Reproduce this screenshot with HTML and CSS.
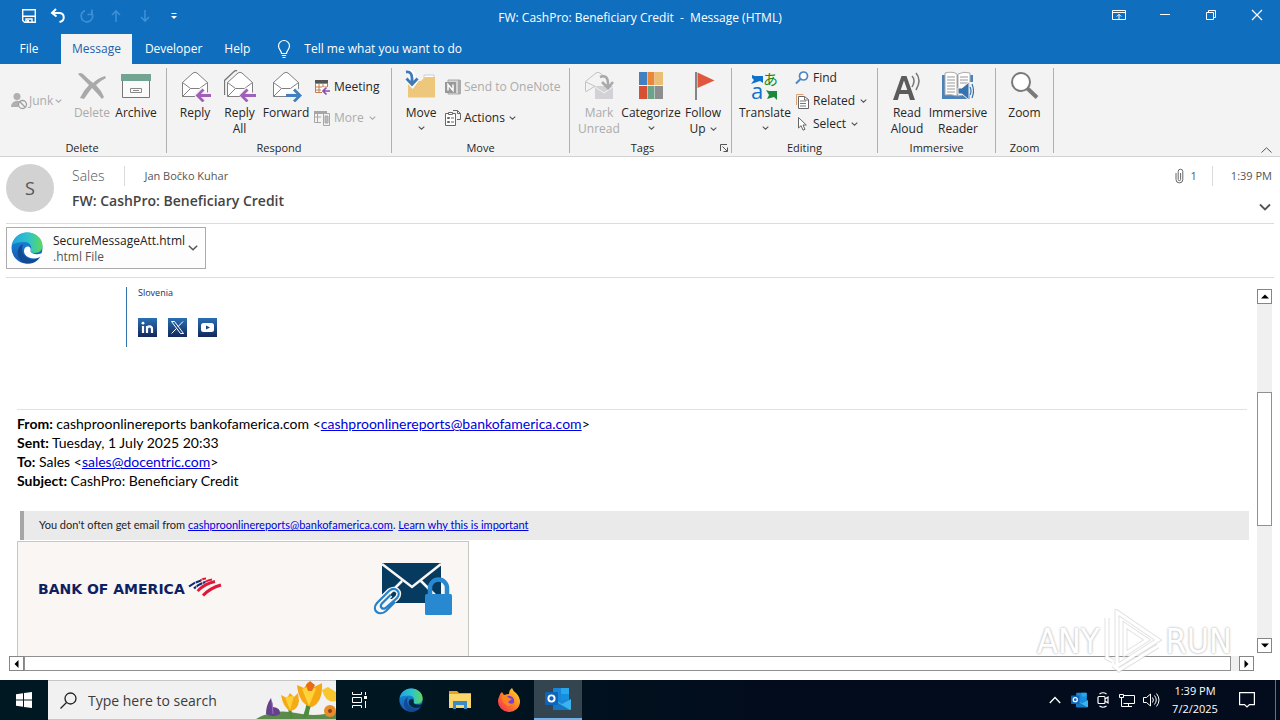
FILE: index.html
```html
<!DOCTYPE html>
<html lang="en">
<head>
<meta charset="utf-8">
<title>FW: CashPro: Beneficiary Credit - Message (HTML)</title>
<link rel="stylesheet" href="styles.css">
</head>
<body>
<svg class="defs" aria-hidden="true">
  <defs>
    <linearGradient id="edgeA" x1="0" y1="0" x2="1" y2="0"><stop offset="0" stop-color="#1fa5e0"/><stop offset=".55" stop-color="#2fc5c8"/><stop offset="1" stop-color="#5fd85a"/></linearGradient>
    <linearGradient id="edgeB" x1="0" y1="0" x2="0" y2="1"><stop offset="0" stop-color="#1b8fdc"/><stop offset="1" stop-color="#1459b0"/></linearGradient>
    <linearGradient id="fox" x1="1" y1="0" x2="0" y2="1"><stop offset="0" stop-color="#ffe23c"/><stop offset=".45" stop-color="#ff8a1e"/><stop offset="1" stop-color="#f0205c"/></linearGradient>
    <linearGradient id="social" x1="0" y1="0" x2="0" y2="1"><stop offset="0" stop-color="#2a70b4"/><stop offset="1" stop-color="#13275c"/></linearGradient>
    <symbol id="chev" viewBox="0 0 7 4"><path d="M.7.6 3.500 3.200 6.300.6" fill="none" stroke="currentColor" stroke-width="1.100"/></symbol>
    <symbol id="edge" viewBox="0 0 32 32">
      <circle cx="16" cy="16" r="15.500" fill="url(#edgeB)"/>
      <path d="M1 13C3 5 9 .5 16.500.5 25 .5 31.500 6.500 31.500 13.500c0 4.500-3 7.500-7.500 7.500-3.500 0-5-1.300-4.500-2.500 2.300-3.500-.5-8.500-6-8.500C8 10 3 11 1 13Z" fill="url(#edgeA)"/>
      <path d="M12 12c-3 6 0 13 7 15 4 1.200 8 .2 10.500-2.500C26 30 21 32 16 31.500 9 31 5.500 24 7 18c.8-3 2.500-5 5-6Z" fill="#124a94"/>
      <path class="edge-hole" d="M19.500 18.500c.5-2-.5-4-2.500-4-2.500 0-4 2-4 4.500 0 6 8.500 9.500 15 6.500 1.500-1 2.700-2.700 3.300-4.500-2 1-4.500 1.500-7.300 1-3.500-.3-5-2-4.500-3.500Z"/>
    </symbol>
    <symbol id="outlook" viewBox="0 0 26 24">
      <rect x="8" y="1" width="16" height="18" rx="1" fill="#1a86d8"/><rect x="16" y="1" width="8" height="6" fill="#28a8ea"/><rect x="16" y="7" width="8" height="6" fill="#1490df"/>
      <path d="M8 12 17 17l9-5v10a1 1 0 0 1-1 1H9a1 1 0 0 1-1-1Z" fill="#3bb3ee"/><path d="M8 13 25 23H9a1 1 0 0 1-1-1Z" fill="#1577c2"/>
      <rect x="0" y="5" width="13" height="13" rx="1" fill="#0c64bd"/><circle cx="6.500" cy="11.500" r="3.100" fill="none" stroke="#fff" stroke-width="1.900"/>
    </symbol>
  </defs>
</svg>

<div class="app">
  <header class="chrome">
    <div class="titlebar">
      <div class="quick">
        <button aria-label="Save"><svg width="16" height="16" viewBox="0 0 16 16"><path d="M1.700 1.700h12.600v12.600H3.500L1.700 12.500Z" fill="none" stroke="#fff" stroke-width="1.400"/><path d="M2 8.200h12M5 14V11h6v3" fill="none" stroke="#fff" stroke-width="1.400"/><path d="M6 12h2v2.500H6z" fill="#fff"/></svg></button>
        <button aria-label="Undo"><svg width="16" height="16" viewBox="0 0 16 16"><path d="M6 1 2 5l4.500 3.500M2.500 5H9c6 0 6.500 8 .5 9" fill="none" stroke="#fff" stroke-width="2"/></svg></button>
        <button aria-label="Redo" disabled><svg width="16" height="16" viewBox="0 0 16 16"><path d="M6 2.600A5.800 5.800 0 1 0 12 4M8.500 6.500h4.500V1.500" fill="none" stroke="#3d90d6" stroke-width="1.700"/></svg></button>
        <button aria-label="Previous" disabled><svg width="16" height="16" viewBox="0 0 16 16"><path d="M8 14V3M4 7l4-4 4 4" fill="none" stroke="#3d90d6" stroke-width="1.600"/></svg></button>
        <button aria-label="Next" disabled><svg width="16" height="16" viewBox="0 0 16 16"><path d="M8 2v11M4 9l4 4 4-4" fill="none" stroke="#3d90d6" stroke-width="1.600"/></svg></button>
        <button aria-label="Customize toolbar"><svg width="16" height="16" viewBox="0 0 16 16"><path d="M5.500 5.500h5" stroke="#fff"/><path d="M5 8h6l-3 3Z" fill="#fff"/></svg></button>
      </div>
      <h1 class="title">FW: CashPro: Beneficiary Credit&nbsp; -&nbsp; Message (HTML)</h1>
      <div class="winbtns">
        <button aria-label="Ribbon options"><svg width="14" height="14" viewBox="0 0 14 14" fill="none" stroke="#fff"><path d="M.5 2.500h13v9H.5zM.5 4.500h13M7 11V6.500M4.800 8.500 7 6.300l2.200 2.200"/></svg></button>
        <button aria-label="Minimize"><svg width="12" height="12" viewBox="0 0 12 12"><path d="M1 5.500h10" stroke="#fff"/></svg></button>
        <button aria-label="Restore"><svg width="12" height="12" viewBox="0 0 12 12" fill="none" stroke="#fff"><path d="M1.500 3.500h7v7h-7zM3.500 3V1.500h7v7H9"/></svg></button>
        <button aria-label="Close"><svg width="12" height="12" viewBox="0 0 12 12"><path d="m1 1 10 10M11 1 1 11" stroke="#fff" stroke-width="1.200"/></svg></button>
      </div>
    </div>
    <nav class="tabs">
      <button class="tab file">File</button>
      <button class="tab active">Message</button>
      <button class="tab">Developer</button>
      <button class="tab">Help</button>
      <button class="tell"><svg width="14" height="20" viewBox="0 0 14 20" fill="none" stroke="#fff" stroke-width="1.200"><path d="M4.500 14.500c0-3-3-4-3-7.500a5.500 5.500 0 0 1 11 0c0 3.500-3 4.500-3 7.500ZM4.800 16.500h4.400M5.500 18.500h3"/></svg>Tell me what you want to do</button>
    </nav>
  </header>

  <section class="ribbon" aria-label="Ribbon">
    <div class="group g-delete">
      <div class="tools">
        <div class="stack">
          <button class="small" disabled><svg width="18" height="18" viewBox="0 0 18 18"><circle cx="7" cy="4.500" r="3.500" fill="#b0b0b0"/><path d="M1 15c0-7 9-8 11-4l-4 4Z" fill="#b0b0b0"/><circle cx="12.500" cy="12.500" r="4" fill="#f3f3f3" stroke="#a0a0a0" stroke-width="1.300"/><path d="m9.800 9.800 5.400 5.400" stroke="#a0a0a0" stroke-width="1.300"/></svg>Junk<svg class="chev"><use href="#chev"/></svg></button>
        </div>
        <button class="big" disabled><svg width="32" height="32" viewBox="0 0 32 32"><path d="M2 4q2-2 5 0 5 5 10 9 5-5 12-7l1 2q-6 3-10 7 5 5 8 12l-2 2q-5-6-10-11-4 5-8 11l-4-1q3-7 9-13Q7 9 2 4Z" fill="#a9a9a9"/></svg>Delete</button>
        <button class="big"><svg width="32" height="32" viewBox="0 0 32 32"><path d="M2.500 10h27v17.500h-27z" fill="#fafafa" stroke="#777"/><path d="M1 4h30v7H1z" fill="#72a492"/><path d="M10.500 18.500h11v4h-11zM13 20.500h6" fill="none" stroke="#888"/></svg>Archive</button>
      </div>
      <div class="gname">Delete</div>
    </div>
    <div class="group g-respond">
      <div class="tools">
        <button class="big"><svg width="32" height="32" viewBox="0 0 32 32"><path d="M3.500 12.500 14 3q2-1.500 4 0l10.500 9.500v14h-25Z" fill="#fff" stroke="#808080"/><path d="m3.500 12.500 8 6h9l8-6M3.500 26.500l8-8" fill="none" stroke="#808080"/><path d="M31 25H19M24 19l-6 6 6 6" fill="none" stroke="#f3f3f3" stroke-width="5"/><path d="M32 25.500H19M24.500 19.500l-6 6 6 6" fill="none" stroke="#a15fba" stroke-width="2.800"/></svg>Reply</button>
        <button class="big"><svg width="32" height="32" viewBox="0 0 32 32"><path d="M.5 25V10.500L10 1.500q2-1.500 3-.5" fill="none" stroke="#777" stroke-width="1.300"/><path d="M3.500 12.500 14 3q2-1.500 4 0l10.500 9.500v14h-25Z" fill="#fff" stroke="#808080"/><path d="m3.500 12.500 8 6h9l8-6M3.500 26.500l8-8" fill="none" stroke="#808080"/><path d="M32 25H19M24 19l-6 6 6 6" fill="none" stroke="#f3f3f3" stroke-width="5"/><path d="M32 25.500H18M23.500 19.500l-6 6 6 6" fill="none" stroke="#a15fba" stroke-width="2.800"/></svg><span>Reply</span><span>All</span></button>
        <button class="big"><svg width="32" height="32" viewBox="0 0 32 32"><path d="M3.500 12.500 14 3q2-1.500 4 0l10.500 9.500v14h-25Z" fill="#fff" stroke="#808080"/><path d="m3.500 12.500 8 6h9l8-6M3.500 26.500l8-8" fill="none" stroke="#808080"/><path d="M16 25h13M25 19l6 6-6 6" fill="none" stroke="#f3f3f3" stroke-width="5"/><path d="M16 25.500h14M24 19.500l6 6-6 6" fill="none" stroke="#437fbd" stroke-width="2.800"/></svg>Forward</button>
        <div class="stack">
          <button class="small"><svg width="16" height="16" viewBox="0 0 16 16"><path d="M1 1h13v4H1z" fill="#555"/><path d="M1.500 4.500h12v9h-12z" fill="#fff" stroke="#c47a4c"/><path d="M5 5v8M9 5v8M2 8h11M2 11h5" stroke="#c47a4c"/><path d="M8 8h8v8H8z" fill="#f3f3f3"/><path d="M16 12H9.500M12.500 8.500 9 12l3.500 3.500" fill="none" stroke="#8a4bab" stroke-width="1.600"/></svg>Meeting</button>
          <button class="small" disabled><svg width="16" height="16" viewBox="0 0 16 16" fill="none" stroke="#a6a6a6"><path d="M0 1h13v3H0z" fill="#a6a6a6" stroke="none"/><path d="M.5 3v9.500H7M0 7h7M3.500 4v8"/><path d="M9.500 3.500h6v12h-6z" fill="#f3f3f3"/><path d="M11 6h3v7h-3z" fill="#bbb"/></svg>More<svg class="chev"><use href="#chev"/></svg></button>
        </div>
      </div>
      <div class="gname">Respond</div>
    </div>
    <div class="group g-move">
      <div class="tools">
        <button class="big"><svg width="32" height="32" viewBox="0 0 32 32"><path d="M19 5h10v8H19z" fill="#fff" stroke="#ccc"/><path d="M3 11h13l4-4h10v20.500H3Z" fill="#ecc77c"/><path d="M1 2q7-2 7 8v4M2 9l5.500 6L12 9" fill="none" stroke="#fff" stroke-width="5"/><path d="M1 2q6.500-1 6 8v4M1.500 8.500l5.500 6 5.500-6" fill="none" stroke="#3f7ab8" stroke-width="2.800"/></svg>Move<svg class="chev"><use href="#chev"/></svg></button>
        <div class="stack">
          <button class="small" disabled><svg width="16" height="16" viewBox="0 0 16 16"><path d="M3 1h12v14H3z" fill="#d5d5d5" stroke="#aaa"/><path d="M13 1h3v14h-3z" fill="#aaa"/><path d="M0 3h11v11H0z" fill="#999"/><path d="M3 11.500v-6l5 6v-6" fill="none" stroke="#fff" stroke-width="1.500"/></svg>Send to OneNote</button>
          <button class="small"><svg width="16" height="16" viewBox="0 0 16 16" fill="none" stroke="#666"><path d="M.5 3.500h10v12H.5z" fill="#fff"/><path d="M3.500 2.500h4v2h-4z" fill="#fff"/><path d="M2.500 7.500h2v1h-2zM6 8h3M2.500 11.500h2v1h-2zM6 12h3M8 .5h4.500l3 3v6H12M12.500.5v3h3"/></svg>Actions<svg class="chev"><use href="#chev"/></svg></button>
        </div>
      </div>
      <div class="gname">Move</div>
    </div>
    <div class="group g-tags">
      <div class="tools">
        <button class="big" disabled><svg width="32" height="32" viewBox="0 0 32 32"><path d="M2.500 21V11.500L13 3q2-1.500 4 0l5 4M2.500 22l8-5h3L3 12" fill="none" stroke="#c2c2c2"/><path d="M12 16h18v13H12z" fill="#d2d2d6"/><path d="m12 17 9 6 9-6" fill="none" stroke="#f3f3f3"/><path d="M17 7q8-3 8 7v4M19 12l6 6 5-6" fill="none" stroke="#a9a9a9" stroke-width="2.600"/></svg><span>Mark</span><span>Unread</span></button>
        <button class="big"><svg width="32" height="32" viewBox="0 0 32 32"><path d="M4 2h8v13H4z" fill="#4280c0"/><path d="M12.500 2h7v13h-7z" fill="#e8893a"/><path d="M20 2h8v13h-8z" fill="#eabf75"/><path d="M4 16h8v13H4z" fill="#d65036"/><path d="M12.500 16h7v13h-7z" fill="#6da38b"/><path d="M20 16h8v13h-8z" fill="#8e8e8e"/></svg>Categorize<svg class="chev"><use href="#chev"/></svg></button>
        <button class="big"><svg width="32" height="32" viewBox="0 0 32 32"><path d="M9 2v28" stroke="#858585" stroke-width="2"/><path d="m10.500 2.500 17 8-17 7.500Z" fill="#e0573d"/></svg><span>Follow</span><span>Up<svg class="chev"><use href="#chev"/></svg></span></button>
      </div>
      <div class="gname">Tags<button class="launcher" aria-label="Tags options"><svg width="8" height="8" viewBox="0 0 8 8"><path d="M.5 7V.5H7M2.500 2.500 7 7M3.500 7.500h4v-4" fill="none" stroke="#555"/></svg></button></div>
    </div>
    <div class="group g-edit">
      <div class="tools">
        <button class="big"><svg width="32" height="32" viewBox="0 0 32 32"><path d="M3 5l3 1h8v7l-3-2-9 3 3-4-2-2Z" fill="#0d72cc"/><path d="m17 20 3 1h8v9l-3-3-7 2 2-4Z" fill="#1a8a3a"/><text x="2" y="29" class="tr-a">a</text><text x="14" y="15" class="tr-j">あ</text></svg>Translate<svg class="chev"><use href="#chev"/></svg></button>
        <div class="stack tight">
          <button class="small"><svg width="14" height="16" viewBox="0 0 14 16"><circle cx="8.500" cy="6" r="4" fill="#fff" stroke="#4c86c4" stroke-width="1.700"/><path d="M5.500 9 1 13.500" stroke="#4c86c4" stroke-width="2"/></svg>Find</button>
          <button class="small"><svg width="14" height="16" viewBox="0 0 14 16" fill="none"><path d="M1.500 12V1.500h7" stroke="#e0a070"/><path d="M3.500 3.500h6l4 3v9h-10z" fill="#fff" stroke="#666"/><path d="M5 8h6M5 10.500h6M5 13h6M9.500 4v3H13" stroke="#777"/></svg>Related<svg class="chev"><use href="#chev"/></svg></button>
          <button class="small"><svg width="14" height="16" viewBox="0 0 14 16"><path d="M3.500 1.500v10.500l2.600-2.300 1.900 4.500 2-.9-2-4.300h3.300Z" fill="#fff" stroke="#666"/></svg>Select<svg class="chev"><use href="#chev"/></svg></button>
        </div>
      </div>
      <div class="gname">Editing</div>
    </div>
    <div class="group g-immersive">
      <div class="tools">
        <button class="big"><svg width="32" height="32" viewBox="0 0 32 32"><path fill-rule="evenodd" d="M2 30 10.500 6h5L24 30h-5l-1.700-6H8.500L6.800 30ZM9.700 20h6.600L13 10.500Z" fill="#5c5c5c"/><path d="M21 6q4 4 0 11M25 3q6 7 0 17" fill="none" stroke="#777" stroke-width="1.500"/></svg><span>Read</span><span>Aloud</span></button>
        <button class="big"><svg width="32" height="32" viewBox="0 0 32 32"><path d="M0 5h31v24H0z" fill="#4b82ba"/><path d="M3 3q8-2 12 1v22q-6-2-12-1ZM16 4q6-3 12-1v22q-6-1-12 1Z" fill="#fff" stroke="#aaa"/><path d="M5 7h8M5 10h8M5 13h8M5 16h8M5 19h8M5 22h8M18 7h8M18 10h8M18 13h8" stroke="#999"/><path d="M28 12h4v20h-4z" fill="#f3f3f3"/><path d="M16 18h4l7-6v18l-7-6h-4Z" fill="#3672ae" stroke="#f3f3f3"/><path d="M28 17q2 4 0 8M30 14q3 7 0 14" fill="none" stroke="#3672ae" stroke-width="1.200"/></svg><span>Immersive</span><span>Reader</span></button>
      </div>
      <div class="gname">Immersive</div>
    </div>
    <div class="group g-zoom">
      <div class="tools">
        <button class="big"><svg width="32" height="32" viewBox="0 0 32 32"><circle cx="12" cy="12" r="9" fill="#fff" stroke="#7a7a7a" stroke-width="2"/><path d="m18.500 18.500 9.500 9" stroke="#7a7a7a" stroke-width="4"/></svg>Zoom</button>
      </div>
      <div class="gname">Zoom</div>
    </div>
    <button class="collapse" aria-label="Collapse ribbon"><svg width="11" height="6" viewBox="0 0 11 6"><path d="M.5 5.500 5.500.8l5 4.700" fill="none" stroke="#555"/></svg></button>
  </section>

  <section class="meta">
    <div class="avatar">S</div>
    <div class="who">
      <div class="names"><span class="sender">Sales</span><span class="to">Jan Bočko Kuhar</span></div>
      <h2>FW: CashPro: Beneficiary Credit</h2>
    </div>
    <div class="when">
      <div class="stamp"><span class="clip"><svg width="9" height="16" viewBox="0 0 9 16"><path d="M1 5v6.500a3.400 3.400 0 0 0 6.800 0V3.500a2.300 2.300 0 0 0-4.600 0v8a1.200 1.200 0 0 0 2.400 0V5" fill="none" stroke="#666"/></svg>1</span><span class="time">1:39 PM</span></div>
      <button class="expand" aria-label="Expand header"><svg width="12" height="8" viewBox="0 0 12 8"><path d="m1 1.500 5 5 5-5" fill="none" stroke="#555" stroke-width="1.800"/></svg></button>
    </div>
  </section>

  <section class="attachments">
    <button class="attach"><svg class="edge-file" width="32" height="32"><use href="#edge"/></svg><span class="fname">SecureMessageAtt.html<small>.html File</small></span><svg width="10" height="6" viewBox="0 0 10 6"><path d="m.8.8 4.200 4 4.200-4" fill="none" stroke="#555" stroke-width="1.500"/></svg></button>
  </section>

  <main class="reader">
    <article class="mail">
      <div class="signature">
        <p>Slovenia</p>
        <div class="social">
          <a href="#" aria-label="LinkedIn"><svg width="19" height="19" viewBox="0 0 19 19"><path d="M0 0h19v19H0z" fill="url(#social)"/><circle cx="5" cy="5.200" r="1.400" fill="#fff"/><path d="M5 8v7M9 15V8M9 11c0-3.500 5-3.500 5 0v4" fill="none" stroke="#fff" stroke-width="2.200"/></svg></a>
          <a href="#" aria-label="X"><svg width="19" height="19" viewBox="0 0 19 19"><path d="M0 0h19v19H0z" fill="url(#social)"/><path d="M3.500 3.500h3l9 12h-3ZM15 3.500l-5 5.200M8.500 10.500l-5 5" fill="none" stroke="#fff"/></svg></a>
          <a href="#" aria-label="YouTube"><svg width="19" height="19" viewBox="0 0 19 19"><path d="M0 0h19v19H0z" fill="url(#social)"/><rect x="3" y="5" width="13" height="9" rx="2.500" fill="#fff"/><path d="m8 7.500 4 2-4 2Z" fill="#1d4480"/></svg></a>
        </div>
      </div>
      <div class="quoted">
        <p><b>From:</b> cashproonlinereports bankofamerica.com &lt;<a href="#">cashproonlinereports@bankofamerica.com</a>&gt;</p>
        <p><b>Sent:</b> Tuesday, 1 July 2025 20:33</p>
        <p><b>To:</b> Sales &lt;<a href="#">sales@docentric.com</a>&gt;</p>
        <p><b>Subject:</b> CashPro: Beneficiary Credit</p>
      </div>
      <div class="notice">You don't often get email from <a href="#">cashproonlinereports@bankofamerica.com</a>. <a href="#">Learn why this is important</a></div>
      <div class="bank">
        <div class="logo"><span>BANK OF AMERICA</span><svg width="34" height="20" viewBox="0 0 34 20"><g fill="none"><path d="M1 9.500Q6 5.500 13 3.500M6 11.500Q10 7.500 17 5" stroke="#102a72" stroke-width="2.200"/><path d="M12.500 3.500Q15 1.500 18 1.500M17 5Q20 3 24 2.500" stroke="#e01838" stroke-width="2"/><path d="M9.500 14Q17 6.500 27 4.500M15 18.500Q22 11 33 8" stroke="#e01838" stroke-width="3"/><path d="m7 4 2 9M14 2l1 6" stroke="#f9f6f3" stroke-width=".7"/></g></svg></div>
        <svg class="secure" width="80" height="56" viewBox="0 0 80 56"><path d="M9 2h59v40H9z" fill="#063a5e"/><path d="m9 3 30 23L68 3M9 40l20-20M68 40 48 20" fill="none" stroke="#f9f6f3" stroke-width="2.500"/><path d="M57 35v-8a8.500 8.500 0 0 1 17 0v8" fill="none" stroke="#2888d0" stroke-width="4.500"/><rect x="52" y="33" width="27" height="21" rx="1.500" fill="#2888d0"/><path d="M18 37 9 45M22 41 13 50c-7 6-15-1-9-8l12-12c6-5 13 1 8 7L12.500 47c-3 2-6-1-4-4l9-9" fill="none" stroke="#f9f6f3" stroke-width="5"/><path d="M22 41 13 50c-7 6-15-1-9-8l12-12c6-5 13 1 8 7L12.500 47c-3 2-6-1-4-4l9-9" fill="none" stroke="#2581c8" stroke-width="2.200"/></svg>
      </div>
    </article>
    <div class="vbar"><button aria-label="Scroll up"><svg width="8" height="5" viewBox="0 0 8 5"><path d="M0 4.500 4 .5l4 4Z"/></svg></button><div class="vtrack"><div class="vthumb"></div></div><button aria-label="Scroll down"><svg width="8" height="5" viewBox="0 0 8 5"><path d="m0 .5 4 4 4-4Z"/></svg></button></div>
    <div class="hbar"><button aria-label="Scroll left"><svg width="5" height="8" viewBox="0 0 5 8"><path d="m4.500 0-4 4 4 4Z"/></svg></button><div class="htrack"><div class="hthumb"></div></div><button aria-label="Scroll right"><svg width="5" height="8" viewBox="0 0 5 8"><path d="m.5 0 4 4-4 4Z"/></svg></button></div>
    <div class="watermark"><span>ANY</span><svg width="60" height="64" viewBox="0 0 60 64" fill="none"><g stroke="#cfcfcf" stroke-width="5" opacity=".6"><path d="M5 9v40l6 3M15 3v54l41-26ZM23 16l22 15-22 14ZM11 56l6 5 39-24"/></g><path d="M5 9v40l6 3M15 3v54l41-26ZM23 16l22 15-22 14ZM11 56l6 5 39-24" stroke="#fff" stroke-width="3"/></svg><span>RUN</span></div>
  </main>

  <footer class="taskbar">
    <button class="start" aria-label="Start"><svg width="16" height="16" viewBox="0 0 16 16" fill="#fff"><path d="M0 2.300 7 1.300v6.200H0zM8 1.100 16 0v7.500H8zM0 8.500h7v6.200l-7-1zM8 8.500h8V16l-8-1.100z"/></svg></button>
    <label class="search"><svg width="17" height="17" viewBox="0 0 17 17" fill="none" stroke="#222" stroke-width="1.300"><circle cx="10.500" cy="6.500" r="5.500"/><path d="M6.500 10.500.5 16.500"/></svg><input type="text" placeholder="Type here to search" aria-label="Search">
      <svg class="flowers" width="80" height="39" viewBox="0 0 80 39"><path d="M0 39Q18 28 40 33T80 31v8Z" fill="#5b8b4c"/><path d="M10 34q0-9 5-16l2 9q8 1 7 7-7 4-14 0Z" fill="#65408c"/><path d="m16 22 1 12" stroke="#9a70c0"/><path d="M33 25q1 8 3 13M53 20q-2 10-5 18M61 12q-9 12-10 24" stroke="#4c8c3c" stroke-width="3" fill="none"/><path d="m25 15 6 3 3-5 4 4 4-4 1 8q-1 9-9 10-7-4-9-16Z" fill="#f5aa18"/><path d="m29 17 5 13 4-14" fill="#ffd034"/><path d="m41 5 7 3 4-6 6 5 8-4q1 19-10 24-13-2-15-22Z" fill="#f6a714"/><path d="m46 9 7 17 7-17-5-3Z" fill="#ffd33a"/><path d="m50 5 4-4 5 4-3 6h-4Z" fill="#e96b16"/><path d="m66 10 6-3 8 5v9q-10 3-14-11Z" fill="#fac62d"/><circle cx="74" cy="31" r="6" fill="#e98b28"/><circle cx="74" cy="31" r="2" fill="#8a4416"/></svg>
    </label>
    <div class="pinned">
      <button class="taskview" aria-label="Task view"><svg width="16" height="16" viewBox="0 0 16 16" fill="none" stroke="#fff"><path d="M.5 0v2.500h9V0M.5 5.500h9v5h-9zM.5 16v-2.500h9V16M13.500 0v3M13.500 9v7"/><path d="M12 4h3v3h-3z" fill="#fff" stroke="none"/></svg></button>
      <button aria-label="Microsoft Edge"><svg class="edge-bar" width="24" height="24"><use href="#edge"/></svg></button>
      <button aria-label="File Explorer"><svg width="22" height="20" viewBox="0 0 22 20"><path d="M0 1h8l2 2h12v3H0z" fill="#e6a128"/><path d="M0 4h22v14H0z" fill="#fbd769"/><path d="M4 11h14v8h-3v-4H7v4H4z" fill="#3a8cc8"/></svg></button>
      <button aria-label="Firefox"><svg width="24" height="24" viewBox="0 0 24 24"><path d="M2 9q1-4 3-5l2 3q3-1 5-1 0-4 3-6 1 3 4 5 4 4 4 9A11 10.500 0 0 1 1 13q0-2 1-4Z" fill="url(#fox)"/><circle cx="12" cy="13" r="5.200" fill="#7a3fd0"/><path d="M5 8q4-2 7 2l3 1-4 3q2 3 6 1-2 4-7 3-5-3-5-10Z" fill="#ff8420"/></svg></button>
      <button class="current" aria-label="Outlook"><svg width="26" height="24"><use href="#outlook"/></svg></button>
    </div>
    <div class="tray">
      <button aria-label="Hidden icons"><svg width="12" height="8" viewBox="0 0 12 8"><path d="m.8 7 5.200-5.500L11.200 7" fill="none" stroke="#fff" stroke-width="1.300"/></svg></button>
      <button aria-label="Outlook status"><svg width="17" height="16"><use href="#outlook"/></svg></button>
      <button aria-label="Meet now"><svg width="12" height="16" viewBox="0 0 12 16" fill="none" stroke="#fff" stroke-width="1.200"><rect x="1" y="4.500" width="7" height="7" rx="1"/><path d="m8 7 3-2v6L8 9M2.500 2Q6-.5 9.500 2M2.500 14q3.500 2.500 7 0"/></svg></button>
      <button aria-label="Network"><svg width="16" height="15" viewBox="0 0 16 15" fill="none" stroke="#fff"><path d="M5 2.500h10.500v8h-11M2.500 5v8.500H13M9.500 10.500v3M.5 1.500h4v3h-4z"/></svg></button>
      <button aria-label="Volume"><svg width="17" height="14" viewBox="0 0 17 14" fill="none" stroke="#fff"><path d="M.5 4.500h3l4-3.500v12l-4-3.500h-3ZM9.500 4.500q1.800 2.500 0 5M11.500 2.500q3.500 4.500 0 9M13.500.5q5 6.500 0 13"/></svg></button>
      <div class="clock">1:39 PM<br>7/2/2025</div>
      <button class="notify" aria-label="Notifications"><svg width="16" height="16" viewBox="0 0 16 16"><path d="M.6.6h14.800v12H10.500L8 15l-2.500-2.400H.6Z" fill="none" stroke="#fff" stroke-width="1.200"/></svg></button>
      <div class="peek"></div>
    </div>
  </footer>
</div>
</body>
</html>
```
FILE: styles.css
```css
* { box-sizing: border-box; }
body { margin: 0; background: #fff; color: #222; font: 12px/16px "Open Sans", "Noto Sans", sans-serif; }
button { font: inherit; color: inherit; background: none; border: 0; padding: 0; margin: 0; }
svg { flex: none; display: block; }
p, h1, h2 { margin: 0; font: inherit; }
.defs { position: absolute; width: 0; height: 0; }
.app { display: flex; flex-direction: column; height: 100vh; overflow: hidden; }

.chrome { background: #106ebe; color: #fff; }
.titlebar { display: grid; grid-template-columns: 1fr auto 1fr; height: 34px; }
.quick { display: flex; padding-left: 14px; height: 32px; }
.quick button { width: 29px; display: grid; place-items: center; }
.title { line-height: 36px; }
.winbtns { display: flex; justify-content: flex-end; height: 30px; }
.winbtns button { width: 46px; display: grid; place-items: center; }
.tabs { display: flex; height: 30px; }
.tab { padding: 0 11px; }
.tab.file { width: 61px; padding: 0 3px 0 0; }
.tab.active { background: #f3f3f3; color: #1a62b0; margin-right: 2px; }
.tell { display: flex; align-items: center; gap: 13px; padding-left: 16px; }

.ribbon { display: flex; padding-top: 4px; height: 93px; background: #f3f3f3; border-bottom: 1px solid #d2d2d2; color: #262626; }
.group { display: flex; flex-direction: column; height: 85px; border-right: 1px solid #b0b0b0; padding: 0 6px; }
.tools { flex: none; display: grid; grid-auto-flow: column; grid-template-rows: 72px; height: 72px; }
.gname { flex: none; position: relative; text-align: center; font-size: 11px; line-height: 16px; }
.launcher { position: absolute; right: -3px; top: 4px; }
.big { display: flex; flex-direction: column; align-items: center; padding-top: 2px; line-height: 16px; white-space: nowrap; }
.big > svg:first-child { margin-bottom: 3px; }
.chev { display: inline-block; width: 7px; height: 4px; color: #555; }
.big > .chev { margin-top: 5px; }
.big span .chev { margin: 0 0 2px 4px; }
.stack { display: grid; grid-auto-rows: 31px; align-content: center; padding-bottom: 4px; }
.stack.tight { grid-auto-rows: 23px; }
.small { display: flex; align-items: center; gap: 3px; white-space: nowrap; }
.small .chev { margin-left: 1px; }
.ribbon button:disabled, .ribbon button:disabled .chev { color: #ababab; }
.g-delete { width: 167px; padding: 0 12px 0 10px; }
.g-delete .tools { grid-template-columns: 60px 44px 44px; }
.g-delete .stack { padding-bottom: 6px; }
.g-delete .small { gap: 1px; }
.g-respond { width: 225px; }
.g-respond .tools { grid-template-columns: 44px 45px 48px 1fr; }
.g-respond .stack { padding-left: 4px; }
.g-respond .small { gap: 4px; }
.g-move { width: 178px; }
.g-move .tools { grid-template-columns: 46px 1fr; }
.g-move .stack { padding-left: 1px; }
.g-tags { width: 162px; }
.g-tags .tools { grid-template-columns: 46px 58px 46px; }
.g-tags .gname { padding-right: 16px; }
.g-edit { width: 146px; }
.g-edit .tools { grid-template-columns: 54px 1fr; }
.g-edit .stack { padding: 0 0 6px 3px; }
.g-edit .small { gap: 4px; }
.g-immersive { width: 118px; }
.g-immersive .tools { grid-template-columns: 46px 56px; }
.g-zoom { width: 58px; padding: 0; }
.tr-a { font: 22px "Open Sans", sans-serif; fill: #0d72cc; }
.tr-j { font: 15px "Noto Sans CJK JP", sans-serif; fill: #138a13; }
.collapse { margin-left: auto; align-self: flex-end; padding: 0 8px 3px 0; }

.meta { display: flex; margin: 0 6px; height: 67px; padding-top: 7px; border-bottom: 1px solid #dcdcdc; color: #555; }
.avatar { width: 48px; height: 48px; border-radius: 50%; background: #d2d2d2; display: grid; place-items: center; font-size: 18px; }
.who { flex: 1; padding-left: 18px; }
.names { display: flex; align-items: center; height: 23px; }
.sender { font-size: 14px; font-weight: 300; padding-right: 20px; border-right: 1px solid #dcdcdc; line-height: 20px; }
.to { font-size: 11px; padding-left: 19px; }
.who h2 { font-size: 14px; font-weight: 600; line-height: 20px; margin-top: 4px; color: #444; }
.when { display: flex; flex-direction: column; align-items: flex-end; font-size: 11px; }
.stamp { display: flex; align-items: center; height: 23px; padding-right: 2px; }
.clip { display: flex; gap: 7px; padding-right: 15px; border-right: 1px solid #dcdcdc; line-height: 20px; align-items: center; }
.time { padding-left: 18px; }
.expand { padding: 16px 3px 0 0; }

.attachments { margin: 0 6px; padding: 3px 0 8px; border-bottom: 1px solid #dcdcdc; }
.attach { display: flex; align-items: center; width: 200px; height: 42px; border: 1px solid #ababab; background: #fdfdfd; padding: 0 7px 0 4px; text-align: left; }
.edge-file { fill: #fff; }
.fname { flex: 1; padding: 2px 0 0 10px; }
.fname small { display: block; font-size: 12px; color: #555; }

.reader { flex: 1; min-height: 0; position: relative; display: grid; grid-template: minmax(0, 1fr) 15px / minmax(0, 1fr) 16px; padding: 9px 8px 9px 9px; }
.mail { overflow: hidden; padding-left: 8px; padding-right: 7px; color: #000; }
.signature { margin-left: 109px; height: 60px; border-left: 1px solid #3173ad; padding-left: 11px; color: #1b2a63; font-size: 9px; line-height: 12px; }
.social { display: flex; gap: 11px; padding-top: 19px; }
.quoted { margin: 62px 2px 0 0; border-top: 1px solid #e1e1e1; padding-top: 4px; font: 14px/19px Lato, "Open Sans", sans-serif; }
.mail a { color: #0000e0; }
.notice { margin: 21px 0 1px 3px; padding: 6px 0 7px 15px; background: #eaeaea; border-left: 4px solid #a6a6a6; font: 11px/16px Lato, "Open Sans", sans-serif; color: #222; }
.bank { display: flex; justify-content: space-between; width: 452px; height: 130px; border: 1px solid #c8c6c0; background: #f9f6f3; padding: 19px 15px 0 20px; }
.logo { display: flex; gap: 3px; padding-top: 16px; height: 40px; color: #0e1f62; font: bold 14px/24px "DejaVu Sans", sans-serif; white-space: nowrap; }

.vbar { display: flex; flex-direction: column; padding: 2px 0 3px 1px; }
.vbar button, .hbar button { flex: none; display: grid; place-items: center; width: 15px; height: 15px; border: 1px solid #858585; background: #fff; }
.vtrack { flex: 1; background: #f0f0f0; padding-top: 88px; }
.vthumb { height: 134px; border: 1px solid #909090; background: #fff; }
.hbar { display: flex; padding-right: 2px; }
.htrack { flex: 1; background: #f0f0f0; padding-right: 8px; }
.hthumb { height: 15px; border: 1px solid #909090; background: #fff; }
.watermark { position: absolute; right: 48px; bottom: 7px; display: flex; align-items: center; gap: 3px; color: #fff; font: 34px/60px "DejaVu Sans Condensed", "Liberation Sans", sans-serif; text-shadow: 0 0 2px #bbb, 0 0 3px #ccc; pointer-events: none; }

.taskbar { display: flex; height: 40px; background: #04101b; color: #fff; }
.taskbar button { display: grid; place-items: center; }
.start { width: 48px; background: #001822; }
.search { position: relative; display: flex; align-items: center; width: 288px; padding-left: 12px; background: #f1f1f1; border: solid #c5c5c5; border-width: 1px 0; }
.search input { flex: 1; min-width: 0; border: 0; outline: 0; background: none; padding: 0 0 0 11px; font: 14px "Open Sans", sans-serif; color: #333; }
.search input::placeholder { color: #3c3c3c; opacity: 1; }
.flowers { position: absolute; right: 0; bottom: 0; }
.pinned { flex: 1; display: flex; gap: 1px; background: linear-gradient(90deg, #001822, #020c1c 60%); }
.pinned button { width: 48px; }
.pinned .taskview { margin-right: 2px; }
.edge-bar { fill: #06283c; }
.pinned .current { background: #34454f; border-bottom: 2px solid #6fb1ea; }
.tray { display: flex; background: #020c1c; }
.tray button { width: 24px; }
.clock { width: 64px; text-align: center; line-height: 18px; padding-top: 2px; font-size: 11px; }
.tray .notify { width: 40px; }
.peek { width: 5px; margin-left: 8px; border-left: 1px solid #6a7078; }
```
